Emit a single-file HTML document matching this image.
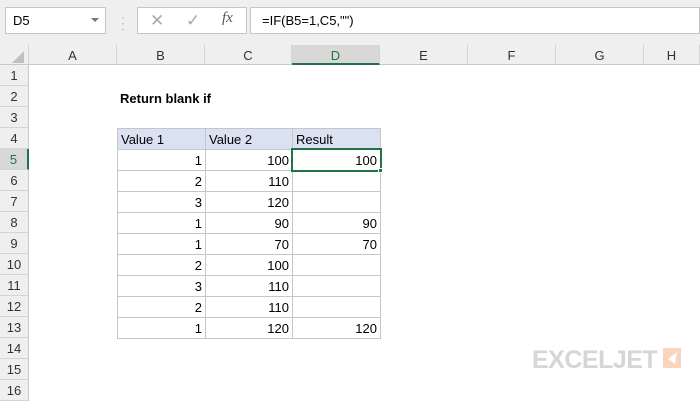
<!DOCTYPE html>
<html><head><style>
body{margin:0;width:700px;height:400px;overflow:hidden;background:#fff;font-family:"Liberation Sans",Arial,sans-serif;position:relative}
.a{position:absolute;box-sizing:border-box}
.ch{position:absolute;top:45px;height:20px;background:#efefef;border-right:1px solid #d4d4d4;border-bottom:1px solid #c8c8c8;text-align:center;font-size:13px;line-height:21px;color:#333;box-sizing:border-box}
.rh{position:absolute;left:0;width:29px;height:21px;background:#efefef;border-bottom:1px solid #d4d4d4;border-right:1px solid #c8c8c8;text-align:center;font-size:13px;line-height:22px;color:#333;box-sizing:border-box}
.c{position:absolute;height:22px;border:1px solid #c6c6c6;font-size:13px;line-height:22px;padding:0 3px;box-sizing:border-box;color:#000}
.r{text-align:right}
.hd{background:#d9e1f2}
</style></head><body>
<div class="a" style="left:0;top:0;width:700px;height:45px;background:#efefef"></div>
<div class="a" style="left:5px;top:7px;width:101px;height:27px;background:#fff;border:1px solid #c6c6c6;font-size:13px;line-height:25px;padding-left:7px">D5</div>
<div class="a" style="left:91px;top:18px;width:0;height:0;border-left:4px solid transparent;border-right:4px solid transparent;border-top:4px solid #777"></div>
<div class="a" style="left:121px;top:14px;color:#aaa;font-size:12px;line-height:6px">·<br>·<br>·</div>
<div class="a" style="left:137px;top:7px;width:110px;height:27px;background:#fff;border:1px solid #c6c6c6"></div>
<div class="a" style="left:150px;top:11px;font-size:17px;color:#aaa">✕</div>
<div class="a" style="left:186px;top:11px;font-size:17px;color:#aaa">✓</div>
<div class="a" style="left:222px;top:10px;font-size:15px;font-style:italic;font-family:'Liberation Serif',serif;color:#555">fx</div>
<div class="a" style="left:250px;top:7px;width:450px;height:27px;background:#fff;border:1px solid #c6c6c6;font-size:13px;line-height:25px;padding-left:11px">=IF(B5=1,C5,"")</div>
<div class="ch" style="left:0;width:29px"></div>
<div class="a" style="left:12px;top:51px;width:0;height:0;border-left:12px solid transparent;border-bottom:12px solid #c0c0c0"></div>
<div class="ch" style="left:29px;width:88px">A</div>
<div class="ch" style="left:117px;width:88px">B</div>
<div class="ch" style="left:205px;width:87px">C</div>
<div class="ch" style="left:292px;width:88px;background:#d8d8d8;border-bottom:2px solid #217346;color:#217346">D</div>
<div class="ch" style="left:380px;width:88px">E</div>
<div class="ch" style="left:468px;width:88px">F</div>
<div class="ch" style="left:556px;width:88px">G</div>
<div class="ch" style="left:644px;width:56px">H</div>
<div class="rh" style="top:65px">1</div><div class="rh" style="top:86px">2</div><div class="rh" style="top:107px">3</div><div class="rh" style="top:128px">4</div>
<div class="rh" style="top:149px;background:#d8d8d8;border-right:2px solid #217346;color:#217346">5</div>
<div class="rh" style="top:170px">6</div><div class="rh" style="top:191px">7</div><div class="rh" style="top:212px">8</div><div class="rh" style="top:233px">9</div><div class="rh" style="top:254px">10</div><div class="rh" style="top:275px">11</div><div class="rh" style="top:296px">12</div><div class="rh" style="top:317px">13</div><div class="rh" style="top:338px">14</div><div class="rh" style="top:359px">15</div><div class="rh" style="top:380px">16</div>
<div class="a" style="left:120px;top:90px;font-size:13px;font-weight:bold;line-height:18px">Return blank if</div>

<div class="c hd" style="left:117px;top:128px;width:89px">Value 1</div>
<div class="c hd" style="left:205px;top:128px;width:88px">Value 2</div>
<div class="c hd" style="left:292px;top:128px;width:89px">Result</div>

<div class="c r" style="left:117px;top:149px;width:89px">1</div><div class="c r" style="left:205px;top:149px;width:88px">100</div><div class="c r" style="left:292px;top:149px;width:89px">100</div>
<div class="c r" style="left:117px;top:170px;width:89px">2</div><div class="c r" style="left:205px;top:170px;width:88px">110</div><div class="c r" style="left:292px;top:170px;width:89px"></div>
<div class="c r" style="left:117px;top:191px;width:89px">3</div><div class="c r" style="left:205px;top:191px;width:88px">120</div><div class="c r" style="left:292px;top:191px;width:89px"></div>
<div class="c r" style="left:117px;top:212px;width:89px">1</div><div class="c r" style="left:205px;top:212px;width:88px">90</div><div class="c r" style="left:292px;top:212px;width:89px">90</div>
<div class="c r" style="left:117px;top:233px;width:89px">1</div><div class="c r" style="left:205px;top:233px;width:88px">70</div><div class="c r" style="left:292px;top:233px;width:89px">70</div>
<div class="c r" style="left:117px;top:254px;width:89px">2</div><div class="c r" style="left:205px;top:254px;width:88px">100</div><div class="c r" style="left:292px;top:254px;width:89px"></div>
<div class="c r" style="left:117px;top:275px;width:89px">3</div><div class="c r" style="left:205px;top:275px;width:88px">110</div><div class="c r" style="left:292px;top:275px;width:89px"></div>
<div class="c r" style="left:117px;top:296px;width:89px">2</div><div class="c r" style="left:205px;top:296px;width:88px">110</div><div class="c r" style="left:292px;top:296px;width:89px"></div>
<div class="c r" style="left:117px;top:317px;width:89px">1</div><div class="c r" style="left:205px;top:317px;width:88px">120</div><div class="c r" style="left:292px;top:317px;width:89px">120</div>

<div class="a" style="left:291px;top:148px;width:91px;height:24px;border:2px solid #217346"></div>
<div class="a" style="left:378px;top:168px;width:5px;height:5px;background:#217346;border:1px solid #fff"></div>

<div class="a" style="left:532px;top:346px;font-size:25px;font-weight:bold;color:#d6d6d6;letter-spacing:-0.5px;line-height:28px">EXCELJET</div>
<div class="a" style="left:663px;top:348px;width:18px;height:20px;background:#f8d5bd"></div>
<svg class="a" style="left:663px;top:348px" width="18" height="20"><path d="M14 4 L5 11 L12 16 Z" fill="#fff"/></svg>
</body></html>
